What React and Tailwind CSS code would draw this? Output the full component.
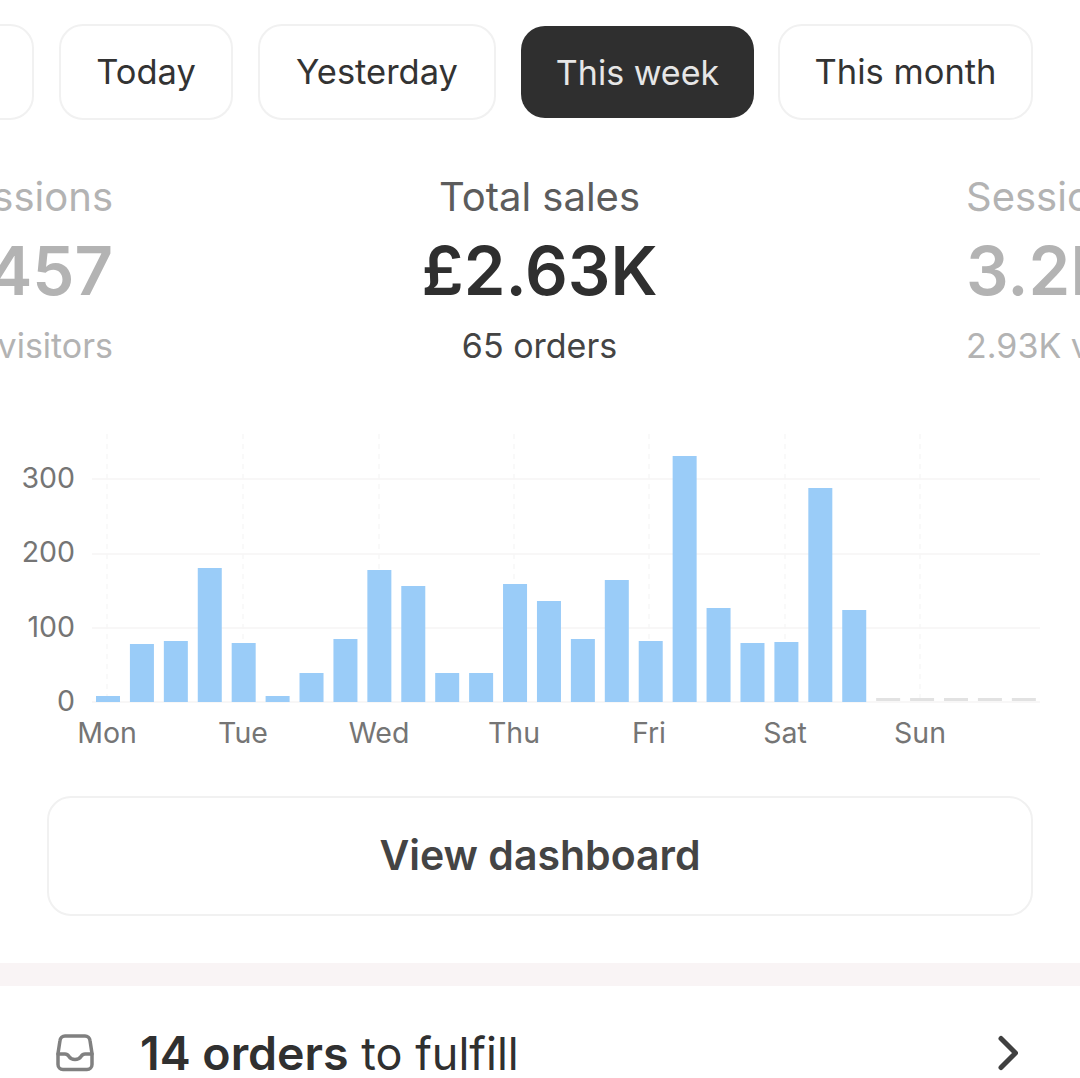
import React from "react";

const tabs = [
  { label: "Today", width: "w-[174px]" },
  { label: "Yesterday", width: "w-[238px]" },
  { label: "This week", width: "w-[233px]", active: true },
  { label: "This month", width: "w-[255px] ml-[-1px]" },
];

// top edge of each bar, in chart coordinates
const barTops = [266, 214, 211, 138, 213, 266, 243, 209, 140, 156, 243, 243, 154, 171, 209, 150, 211, 26, 178, 213, 212, 58, 180];
const dayLabels = [
  ["Mon", 107],
  ["Tue", 243],
  ["Wed", 379],
  ["Thu", 514],
  ["Fri", 649],
  ["Sat", 785],
  ["Sun", 920],
];
const yLabels = [
  ["300", 48],
  ["200", 122],
  ["100", 197],
  ["0", 271],
];
const BASE = 272;

function Chart() {
  return (
    <svg viewBox="0 0 1080 330" className="block w-[1080px] h-[330px]">
      {dayLabels.map(([, x]) => (
        <line key={x} x1={x} x2={x} y1="4" y2={BASE} stroke="#f8f8f8" strokeWidth="1.5" strokeDasharray="5 5" />
      ))}
      {[49, 124, 198, BASE].map((y) => (
        <line key={y} x1="92" x2="1040" y1={y} y2={y} stroke="#f6f4f4" strokeWidth="1.5" />
      ))}
      {barTops.map((top, i) => (
        <rect key={i} x={96 + i * 33.92} y={top} width="24" height={BASE - top} fill="#9accf8" />
      ))}
      {[23, 24, 25, 26, 27].map((i) => (
        <rect key={i} x={96 + i * 33.92} y={BASE - 4} width="24" height="3" fill="#e2e2e2" />
      ))}
      {yLabels.map(([t, y]) => (
        <text key={t} x="75" y={y} dy="0.36em" textAnchor="end" fontSize="28.5" fill="#757575">
          {t}
        </text>
      ))}
      {dayLabels.map(([t, x]) => (
        <text key={t} x={x} y="303" dy="0.36em" textAnchor="middle" fontSize="28.5" fill="#757575">
          {t}
        </text>
      ))}
    </svg>
  );
}

function OrdersIcon() {
  return (
    <svg viewBox="0 0 38 38" className="w-[38px] h-[38px]" fill="none" stroke="#808080" strokeWidth="3.500" strokeLinecap="round" strokeLinejoin="round">
      <path d="M9 2h20a5 5 0 0 1 5 4.500l2 13v11a5 5 0 0 1-5 5H7a5 5 0 0 1-5-5v-11l2-13A5 5 0 0 1 9 2z" />
      <path d="M2 20h7c2 0 3 1 4 2.500s3 3 6 3 5-1.500 6-3 2-2.500 4-2.500h7" />
    </svg>
  );
}

function Chevron() {
  return (
    <svg viewBox="0 0 20 36" className="w-5 h-9" fill="none" stroke="#404040" strokeWidth="5" strokeLinecap="round" strokeLinejoin="round">
      <path d="M3 3.500 17.500 18 3 32.500" />
    </svg>
  );
}

export default function App() {
  return (
    <div className="h-[1078px] w-[1080px] overflow-hidden bg-white font-[Inter,sans-serif]">
      {/* Date range tabs */}
      <div className="flex gap-[25px] pt-6 ml-[-66px]">
        <div className="w-[100px] h-24 shrink-0 rounded-3xl border-2 border-[#f1f1f1]" />
        {tabs.map((t) => (
          <div
            key={t.label}
            className={
              t.active
                ? `${t.width} h-[92px] mt-0.5 shrink-0 flex items-center justify-center rounded-3xl bg-[#2f2f2f] text-[#e6e6e6] text-[34px]`
                : `${t.width} h-24 shrink-0 flex items-center justify-center rounded-3xl border-2 border-[#f1f1f1] text-[#333] text-[34.5px]`
            }
          >
            {t.label}
          </div>
        ))}
      </div>

      {/* Metric carousel */}
      <div className="flex mt-[52px] whitespace-nowrap">
        <div className="w-[113px] shrink-0 flex flex-col items-end overflow-hidden text-[#b3b3b3]">
          <div className="text-[40px] leading-[50px]">Sessions</div>
          <div className="text-[67px] leading-[74px] mt-3 font-semibold">3.457</div>
          <div className="text-[34px] leading-[50px] mt-[13px]">3.12K visitors</div>
        </div>
        <div className="flex-1 flex flex-col items-center">
          <div className="text-[40px] leading-[50px] text-[#5c5c5c]">Total sales</div>
          <div className="text-[67px] leading-[74px] mt-3 font-semibold text-[#2f2f2f]">£2.63K</div>
          <div className="text-[34px] leading-[50px] mt-[13px] text-[#444]">65 orders</div>
        </div>
        <div className="w-[114px] shrink-0 flex flex-col items-start overflow-hidden text-[#b3b3b3]">
          <div className="text-[40px] leading-[50px]">Sessions</div>
          <div className="text-[67px] leading-[74px] mt-3 font-semibold">3.2K</div>
          <div className="text-[34px] leading-[50px] mt-[13px]">2.93K visitors</div>
        </div>
      </div>

      <div className="mt-[59px]">
        <Chart />
      </div>

      <div className="mx-[47px] mt-[36px] h-[120px] flex items-center justify-center rounded-3xl border-2 border-[#f1f1f1] text-[41px] font-semibold text-[#444]">
        View dashboard
      </div>

      <div className="mt-[47px] h-[23px] bg-[#f9f4f5]" />

      {/* Orders row */}
      <div className="flex items-center pl-14 pr-[62px] mt-[37px] h-[60px]">
        <OrdersIcon />
        <div className="ml-[46px] flex-1 text-[45px] leading-[60px] text-[#303030]">
          <span className="font-semibold text-[46.5px]">14 orders</span> to fulfill
        </div>
        <Chevron />
      </div>
    </div>
  );
}
